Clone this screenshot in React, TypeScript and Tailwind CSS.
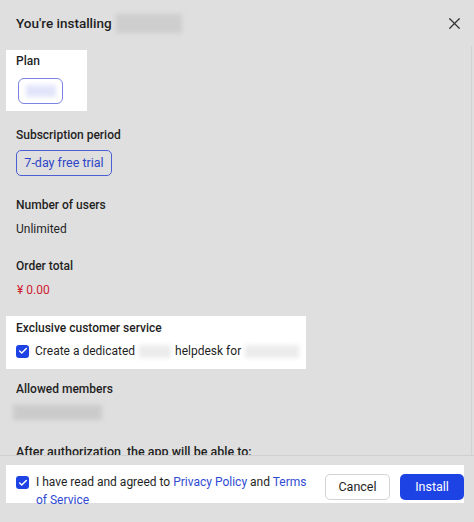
import { X, Check } from 'lucide-react';

function Checkbox() {
  return (
    <span className="flex h-[13px] w-[13px] shrink-0 items-center justify-center rounded-[3px] bg-[#1e43e4]">
      <Check className="h-[10px] w-[10px] text-white" strokeWidth={3.5} />
    </span>
  );
}

function Blur({ className }: { className: string }) {
  return <span className={`inline-block blur-[2px] ${className}`} />;
}

export default function App() {
  return (
    <div
      className="flex h-[522px] w-[474px] flex-col overflow-hidden bg-[#dfdfdf] text-[12px] text-[#1f1f1f]"
      style={{ fontFamily: 'Roboto, "Liberation Sans", Arial, sans-serif' }}
    >
      {/* header */}
      <div className="flex h-[46px] shrink-0 items-center justify-between pl-4 pr-[10px]">
        <div className="flex items-center gap-[4px]">
          <span className="text-[13.5px] font-medium">You're installing</span>
          <Blur className="h-[19px] w-[66px] bg-[#cecece]" />
        </div>
        <X className="h-[19px] w-[19px] text-[#333]" strokeWidth={1.5} />
      </div>

      {/* scrolling body */}
      <div className="mr-[2px] flex min-h-0 flex-1 flex-col overflow-hidden border-r border-[#d2d2d2] pt-[4px]">
        <div className="ml-[6px] flex w-[81px] flex-col bg-white px-[10px] pb-[7px] pt-[3px]">
          <div className="leading-[16px] font-medium">Plan</div>
          <div className="ml-[2px] mt-[9px] flex h-[26px] w-[45px] items-center justify-center rounded-[6px] border border-[#7b84e2]">
            <Blur className="h-[12px] w-[30px] bg-[#e2e5fa]" />
          </div>
        </div>

        <div className="px-4">
          <div className="mt-[16px] leading-[16px] font-medium">Subscription period</div>
          <div className="mt-[7px] flex h-[26px] w-[96px] items-center justify-center rounded-[5px] border border-[#4b5fd2] text-[12.5px] text-[#3046c6]">
            7-day free trial
          </div>

          <div className="mt-[21px] leading-[16px] font-medium">Number of users</div>
          <div className="mt-[8px] leading-[16px]">Unlimited</div>

          <div className="mt-[21px] leading-[16px] font-medium">Order total</div>
          <div className="mt-[8px] pl-[1px] leading-[16px] text-[#cf2030]">¥ 0.00</div>
        </div>

        <div className="ml-[6px] mt-[18px] w-[300px] bg-white px-[10px] pb-[10px] pt-[4px]">
          <div className="leading-[16px] font-medium">Exclusive customer service</div>
          <div className="mt-[7px] flex h-[16px] items-center gap-[6px]">
            <Checkbox />
            <span className="flex items-center whitespace-nowrap">
              Create a dedicated
              <Blur className="mx-[4px] h-[13px] w-[32px] bg-[#ececec]" />
              helpdesk for
              <Blur className="ml-[4px] h-[13px] w-[54px] bg-[#ececec]" />
            </span>
          </div>
        </div>

        <div className="px-4">
          <div className="mt-[12px] leading-[16px] font-medium">Allowed members</div>
        </div>
        <Blur className="ml-[13px] mt-[8px] h-[15px] w-[89px] shrink-0 bg-[#cbcbcb]" />
        <div className="px-4">
          <div className="mt-[24px] text-[12.5px] leading-[16px] font-medium">After authorization, the app will be able to:</div>
        </div>
      </div>

      {/* footer */}
      <div className="h-[67px] shrink-0 border-t border-[#cfcfcf] pt-[9px]">
        <div className="ml-[6px] flex h-[38px] w-[458px] items-start justify-between bg-white pl-[10px]">
          <div className="mt-[11px] flex w-[292px] items-start gap-[7px]">
            <Checkbox />
            <p className="-mt-[3px] w-[272px] leading-[18px]">
              I have read and agreed to <span className="text-[#2f4bd3]">Privacy Policy</span> and{' '}
              <span className="text-[#2f4bd3]">Terms of Service</span>
            </p>
          </div>
          <div className="mt-[9px] flex gap-[10px] text-[12.5px]">
            <button className="flex h-[26px] w-[65px] items-center justify-center rounded-[5px] border border-[#d4d4d4] bg-white">
              Cancel
            </button>
            <button className="flex h-[26px] w-[64px] items-center justify-center rounded-[5px] bg-[#1e43e4] text-white">
              Install
            </button>
          </div>
        </div>
      </div>
    </div>
  );
}
